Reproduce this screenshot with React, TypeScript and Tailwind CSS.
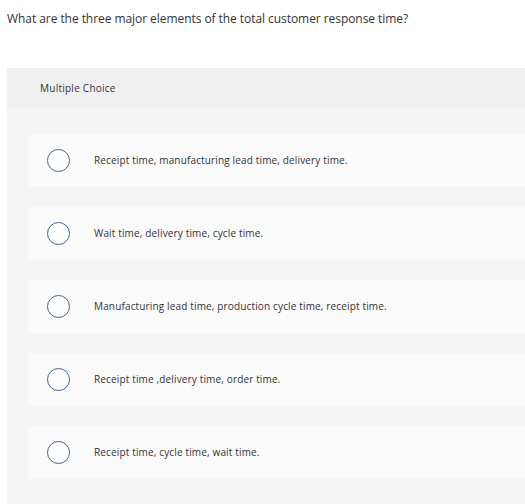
import React from "react";

const options = [
  "Receipt time, manufacturing lead time, delivery time.",
  "Wait time, delivery time, cycle time.",
  "Manufacturing lead time, production cycle time, receipt time.",
  "Receipt time ,delivery time, order time.",
  "Receipt time, cycle time, wait time.",
];

export default function App() {
  return (
    <div
      className="w-[525px] h-[504px] overflow-hidden bg-white text-[#333333]"
      style={{ fontFamily: '"Open Sans", "Liberation Sans", Arial, sans-serif' }}
    >
      <div className="pl-[7px] pt-[10px] h-[68px] text-[12px] leading-[17px] tracking-[-0.06px]">
        What are the three major elements of the total customer response time?
      </div>
      <div className="ml-[7px] bg-[#f5f5f5] h-[460px]">
        <div className="h-[40px] bg-[#f0f0f0] flex items-center pl-[33px] text-[10px] tracking-[0.25px]">
          Multiple Choice
        </div>
        <div className="pl-[21px] pt-[26px] flex flex-col gap-[20px]">
          {options.map((o) => (
            <div
              key={o}
              className="h-[53px] bg-[#fafafa] rounded-l-[3px] flex items-center"
            >
              <div className="ml-[19px] w-[23px] h-[23px] rounded-full border-[1.5px] border-[#3a6591] bg-white shrink-0" />
              <div className="ml-[24px] text-[10px] leading-[13px] tracking-[0.15px]">{o}</div>
            </div>
          ))}
        </div>
      </div>
    </div>
  );
}
